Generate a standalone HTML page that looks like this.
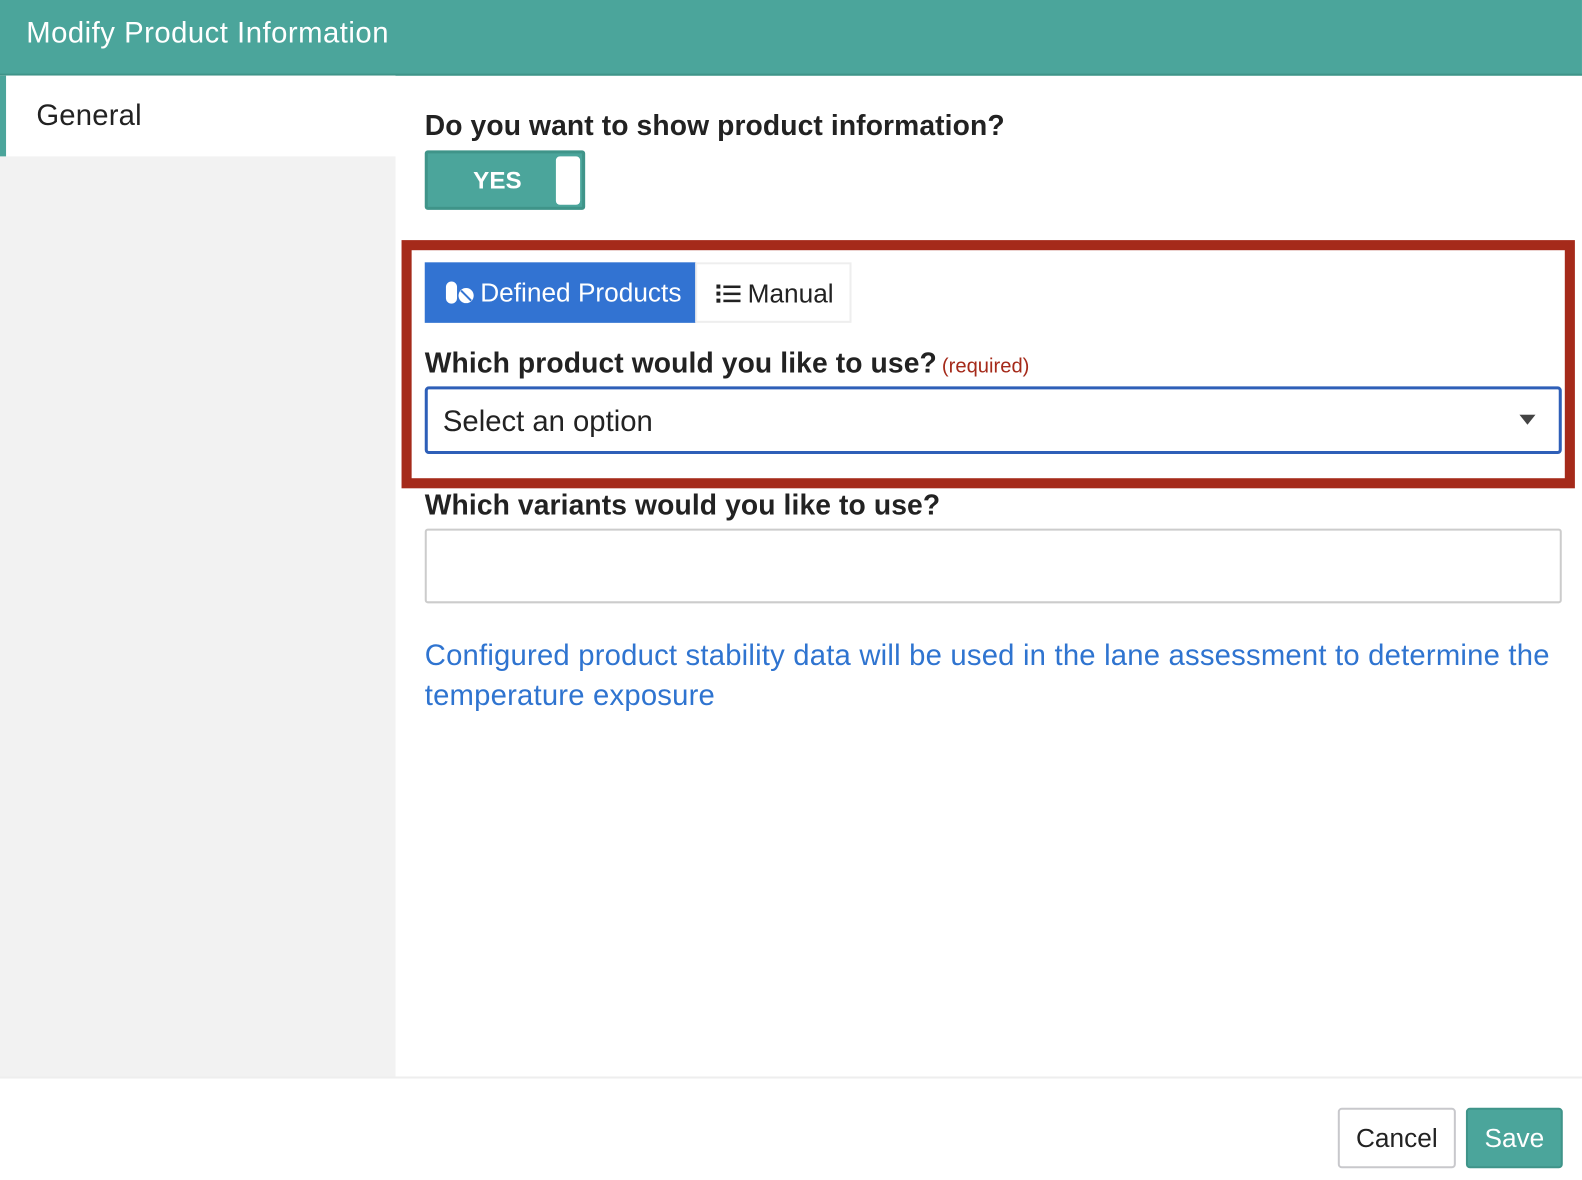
<!DOCTYPE html>
<html><head><style>
*{box-sizing:border-box;margin:0;padding:0}
body{width:1582px;height:1180px;position:relative;font-family:"Liberation Sans",sans-serif;background:#fff;overflow:hidden;color:#222}
#w{position:absolute;left:0;top:0;width:1568px;height:1170px;transform:scale(1.0089);transform-origin:0 0}
.hdr{position:absolute;left:0;top:0;width:1568px;height:75px;background:#4ba59b;border-bottom:2px solid #3f9489}
.hdr span{position:absolute;left:26px;top:17px;color:#fff;font-size:29px;letter-spacing:0.5px}
.side{position:absolute;left:0;top:75px;width:392px;height:993px;background:#f2f2f2}
.gen{position:absolute;left:0;top:75px;width:392px;height:80px;background:#fff;border-left:6px solid #4ba59b}
.gen span{position:absolute;left:30px;top:24px;font-size:29px;letter-spacing:0.2px}
.abs{position:absolute}
.lbl{font-size:28px;font-weight:bold;color:#222;letter-spacing:0.1px}
.tog{left:421px;top:149px;width:159px;height:59px;background:#4ba59b;border:3px solid #3f9489;border-radius:3px}
.tog span{position:absolute;left:45px;top:14px;color:#fff;font-weight:bold;font-size:24px}
.tog i{position:absolute;left:127px;top:3px;width:24px;height:48px;background:#fff;border-radius:4px}
.red{left:398px;top:238px;width:1163px;height:246px;border:10px solid #a52a1a}
.btn1{left:421px;top:260px;width:269px;height:60px;background:#3273d2;color:#fff;font-size:26px}
.btn2{left:689px;top:260px;width:155px;height:60px;border:2px solid #eee;font-size:26px}
.sel{left:421px;top:383px;width:1127px;height:67px;border:3px solid #2e5fb8;border-radius:4px;font-size:29px}
.inp{left:421px;top:524px;width:1127px;height:74px;border:2px solid #ccc;border-radius:3px}
.foot{left:0;top:1067px;width:1568px;height:2px;background:#eee}
.cancel{left:1326px;top:1098px;width:117px;height:60px;border:2px solid #c8c8cc;border-radius:4px;font-size:26px;text-align:center;line-height:56px}
.save{left:1453px;top:1098px;width:96px;height:60px;background:#4ba59b;border:2px solid #3f9489;border-radius:4px;font-size:26px;color:#fff;text-align:center;line-height:56px}
</style></head><body><div id="w">
<div class="hdr"><span>Modify Product Information</span></div>
<div class="side"></div>
<div class="gen"><span>General</span></div>
<div class="abs lbl" style="left:421px;top:109px">Do you want to show product information?</div>
<div class="abs tog"><span>YES</span><i></i></div>
<div class="abs red"></div>
<div class="abs btn1">
<svg class="abs" style="left:20px;top:18px" width="30" height="24" viewBox="0 0 30 24"><rect x="1" y="1" width="11" height="22" rx="5.5" fill="#fff"/><circle cx="21" cy="15" r="7.5" fill="#fff"/><line x1="16" y1="10" x2="26" y2="20" stroke="#3273d2" stroke-width="2"/></svg>
<span class="abs" style="left:55px;top:15px">Defined Products</span></div>
<div class="abs btn2">
<svg class="abs" style="left:19px;top:19px" width="24" height="20" viewBox="0 0 24 20"><g fill="#222"><rect x="0" y="1" width="4" height="4"/><rect x="0" y="8" width="4" height="4"/><rect x="0" y="15" width="4" height="4"/><rect x="7" y="2" width="17" height="2.5"/><rect x="7" y="9" width="17" height="2.5"/><rect x="7" y="16" width="17" height="2.5"/></g></svg>
<span class="abs" style="left:50px;top:14px">Manual</span></div>
<div class="abs lbl" style="left:421px;top:344px">Which product would you like to use?<span style="font-weight:normal;font-size:20px;color:#a52a1a;letter-spacing:0;margin-left:5px">(required)</span></div>
<div class="abs sel"><span class="abs" style="left:15px;top:16px">Select an option</span>
<svg class="abs" style="left:1082px;top:25px" width="16" height="10"><polygon points="0,0 16,0 8,10" fill="#444"/></svg></div>
<div class="abs lbl" style="left:421px;top:485px">Which variants would you like to use?</div>
<div class="abs inp"></div>
<div class="abs" style="left:421px;top:630px;width:1145px;font-size:29px;line-height:40px;color:#2f74d0;letter-spacing:0.2px">Configured product stability data will be used in the lane assessment to determine the temperature exposure</div>
<div class="abs foot"></div>
<div class="abs cancel">Cancel</div>
<div class="abs save">Save</div>
</div></body></html>
